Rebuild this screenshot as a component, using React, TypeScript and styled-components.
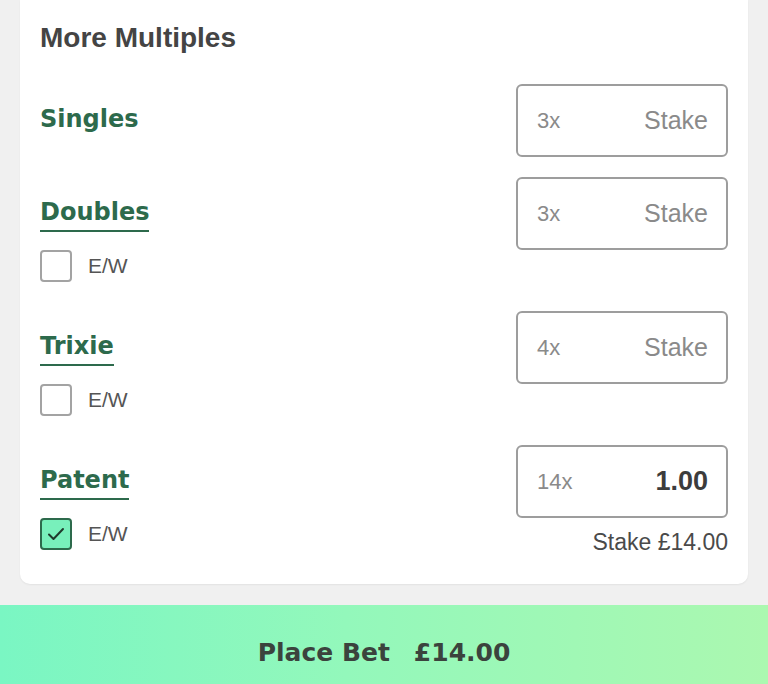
import React from "react";
import styled, { createGlobalStyle } from "styled-components";

const GlobalStyle = createGlobalStyle`
  html, body {
    margin: 0;
    padding: 0;
    background: #f0f0f0;
    font-family: "Liberation Sans", Arial, sans-serif;
  }
`;

type Bet = {
  name: string;
  lines: number;
  ew?: boolean;
  linked?: boolean;
  stake?: string;
  total?: string;
};

const BETS: Bet[] = [
  { name: "Singles", lines: 3 },
  { name: "Doubles", lines: 3, ew: false, linked: true },
  { name: "Trixie", lines: 4, ew: false, linked: true },
  { name: "Patent", lines: 14, ew: true, linked: true, stake: "1.00", total: "£14.00" },
];

const Page = styled.div`
  display: flex;
  flex-direction: column;
  min-height: 684px;
`;

const Card = styled.section`
  margin: 0 20px;
  background: #fff;
  border-radius: 0 0 10px 10px;
  box-shadow: 0 1px 2px rgba(0, 0, 0, 0.06);
  padding: 22px 20px 21px;
`;

const Heading = styled.h2`
  margin: 0;
  font-size: 28px;
  line-height: 32px;
  font-weight: 700;
  color: #444;
`;

const List = styled.div`
  margin-top: 30px;
  display: flex;
  flex-direction: column;
  gap: 20px;
`;

const Row = styled.div<{ $hasEw: boolean }>`
  display: flex;
  justify-content: space-between;
  align-items: flex-start;
  padding-bottom: ${(p) => (p.$hasEw ? "9px" : "0")};
`;

const Left = styled.div`
  display: flex;
  flex-direction: column;
  align-items: flex-start;
`;

const LabelWrap = styled.div`
  height: 73px;
  display: flex;
  align-items: center;
`;

const BetName = styled.span<{ $linked: boolean }>`
  display: inline-block;
  font-family: "DejaVu Sans", Verdana, sans-serif;
  font-size: 24px;
  line-height: 30px;
  font-weight: 700;
  color: #2d6a4c;
  padding: 2px 0 3px;
  border-bottom: 2px solid ${(p) => (p.$linked ? "#2d6a4c" : "transparent")};
`;

const EwRow = styled.label`
  display: flex;
  align-items: center;
  gap: 16px;
  font-size: 21px;
  color: #555;
`;

const Check = styled.span<{ $on: boolean }>`
  box-sizing: border-box;
  width: 32px;
  height: 32px;
  border-radius: 4px;
  border: 2px solid ${(p) => (p.$on ? "#2d6a4c" : "#a3a3a3")};
  background: ${(p) => (p.$on ? "#78f0bb" : "#fff")};
  display: flex;
  align-items: center;
  justify-content: center;
`;

const Right = styled.div`
  display: flex;
  flex-direction: column;
  align-items: flex-end;
`;

const StakeBox = styled.div`
  box-sizing: border-box;
  width: 212px;
  height: 73px;
  border: 2px solid #9d9d9d;
  border-radius: 6px;
  display: flex;
  align-items: center;
  justify-content: space-between;
  padding: 0 18px 0 19px;
`;

const Lines = styled.span`
  font-size: 22px;
  color: #8a8a8a;
`;

const StakeValue = styled.span<{ $filled: boolean }>`
  font-size: ${(p) => (p.$filled ? "27px" : "25px")};
  font-weight: ${(p) => (p.$filled ? 700 : 400)};
  color: ${(p) => (p.$filled ? "#3c3c3c" : "#8a8a8a")};
`;

const Total = styled.div`
  margin-top: 12px;
  font-size: 23px;
  line-height: 24px;
  color: #4a4a4a;
`;

const PlaceBar = styled.button`
  margin-top: 21px;
  height: 79px;
  border: none;
  padding: 33px 0 0;
  display: flex;
  justify-content: center;
  align-items: flex-start;
  gap: 24px;
  background: linear-gradient(90deg, #7af6c3 0%, #93f8bb 45%, #abf8b0 100%);
  font-family: "DejaVu Sans", Verdana, sans-serif;
  font-size: 25px;
  line-height: 30px;
  font-weight: 700;
  color: #3b433d;
`;

function Tick() {
  return (
    <svg width="18" height="14" viewBox="0 0 18 14" fill="none">
      <path d="M2 7.5l4.5 4.5L16 2" stroke="#1f3a2c" strokeWidth="2" strokeLinecap="round" strokeLinejoin="round" />
    </svg>
  );
}

export default function App() {
  return (
    <Page>
      <GlobalStyle />
      <Card>
        <Heading>More Multiples</Heading>
        <List>
          {BETS.map((bet) => (
            <Row key={bet.name} $hasEw={bet.ew !== undefined}>
              <Left>
                <LabelWrap>
                  <BetName $linked={!!bet.linked}>{bet.name}</BetName>
                </LabelWrap>
                {bet.ew !== undefined && (
                  <EwRow>
                    <Check $on={bet.ew}>{bet.ew && <Tick />}</Check>
                    E/W
                  </EwRow>
                )}
              </Left>
              <Right>
                <StakeBox>
                  <Lines>{bet.lines}x</Lines>
                  <StakeValue $filled={!!bet.stake}>{bet.stake ?? "Stake"}</StakeValue>
                </StakeBox>
                {bet.total && <Total>Stake {bet.total}</Total>}
              </Right>
            </Row>
          ))}
        </List>
      </Card>
      <PlaceBar>
        <span>Place Bet</span>
        <span>£14.00</span>
      </PlaceBar>
    </Page>
  );
}
